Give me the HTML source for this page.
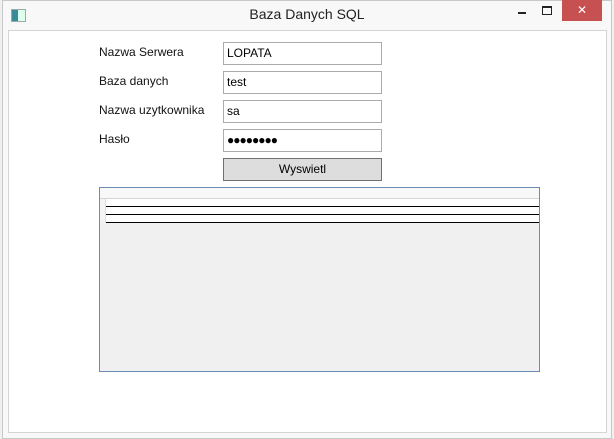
<!DOCTYPE html>
<html><head><style>
body{margin:0;width:614px;height:439px;background:#f0f0f0;position:relative;overflow:hidden;font-family:"Liberation Sans",sans-serif;}
.win{position:absolute;left:2px;top:0;width:610px;height:439px;background:#f8f8f8;border:1px solid #c8c8c8;box-sizing:border-box;}
.title{position:absolute;left:0;width:614px;top:6px;text-align:center;font-size:14px;color:#222;}
.client{position:absolute;left:8px;top:30px;width:599px;height:403px;background:#fff;border:1px solid #d4d4d4;box-sizing:border-box;}
.close{position:absolute;left:562px;top:0;width:40px;height:21px;background:#c75050;color:#fff;text-align:center;font-size:12px;line-height:21px;}
.lbl{position:absolute;left:99px;font-size:12px;color:#111;}
.inp{position:absolute;left:223px;width:159px;height:23px;border:1px solid #ababab;box-sizing:border-box;font-size:12px;padding:3px 0 0 3px;color:#000;background:#fff;}
.btn{position:absolute;left:223px;top:158px;width:159px;height:23px;border:1px solid #707070;background:#dddddd;box-sizing:border-box;font-size:12px;text-align:center;line-height:21px;}
.grid{position:absolute;left:99px;top:187px;width:441px;height:185px;border:1px solid #6d8cb3;background:#f0f0f0;box-sizing:border-box;}
.hl{position:absolute;left:6px;right:0;height:1px;background:#000;}
</style></head><body>
<div class="win"></div>
<div style="position:absolute;left:11px;top:9px;width:13px;height:11px;border:1px solid #9aa;background:linear-gradient(90deg,#3a8a9a 45%,#dfe 45%);"></div>
<div class="title">Baza Danych SQL</div>
<div style="position:absolute;left:518px;top:12px;width:8px;height:2px;background:#222"></div>
<div style="position:absolute;left:542px;top:6px;width:8px;height:6px;border:1px solid #222;border-top-width:2px"></div>
<div class="close">✕</div>
<div class="client"></div>
<div class="lbl" style="top:45px">Nazwa Serwera</div>
<div class="lbl" style="top:74px">Baza danych</div>
<div class="lbl" style="top:103px">Nazwa uzytkownika</div>
<div class="lbl" style="top:132px">Hasło</div>
<div class="inp" style="top:42px">LOPATA</div>
<div class="inp" style="top:71px">test</div>
<div class="inp" style="top:100px">sa</div>
<div class="inp" style="top:129px;font-size:12px;padding-top:3px;letter-spacing:-1px">●●●●●●●●</div>
<div class="btn">Wyswietl</div>
<div class="grid">
<div style="position:absolute;left:0;right:0;top:0;height:10px;background:#f8f8f8;border-bottom:1px solid #d5d5d5"></div>
<div style="position:absolute;left:0;top:11px;width:5px;height:24px;background:#f4f4f4;border-right:1px solid #ddd"></div>
<div style="position:absolute;left:6px;right:0;top:11px;height:24px;background:#fff"></div>
<div class="hl" style="top:18px"></div>
<div class="hl" style="top:26px"></div>
<div class="hl" style="top:34px"></div>
</div>
</body></html>
